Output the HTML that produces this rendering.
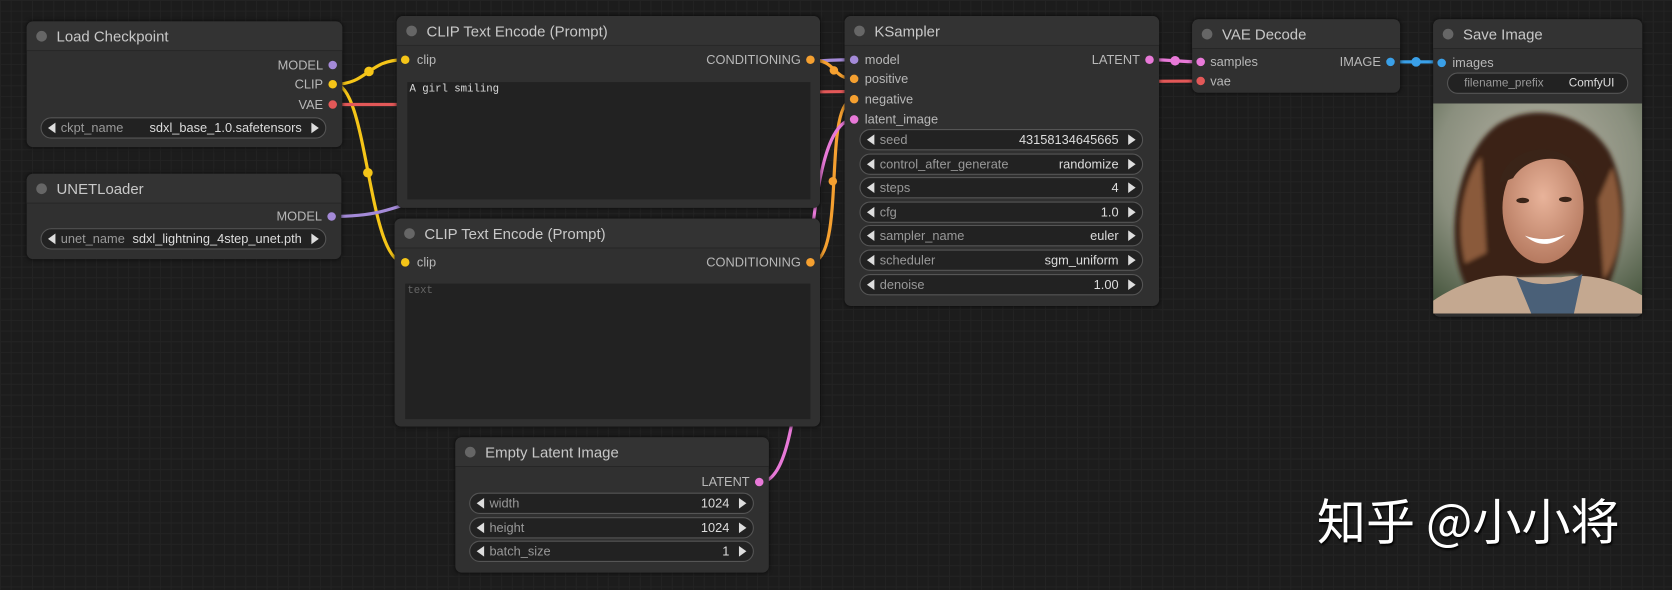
<!DOCTYPE html>
<html><head><meta charset="utf-8"><style>
*{margin:0;padding:0;box-sizing:border-box}
html,body{width:1672px;height:590px;overflow:hidden;background:#1d1d1d}
#w{position:absolute;left:0;top:0;width:1568px;height:553px;transform:scale(1.06633);transform-origin:0 0;
background-color:#1c1c1c;background-image:linear-gradient(#232323 1px,transparent 1px),linear-gradient(90deg,#232323 1px,transparent 1px);background-size:10px 10px;
font-family:"Liberation Sans",Arial,sans-serif;color:#aaa}
.n{position:absolute;background:#303030;border-radius:6px;box-shadow:0 0 4px #000a}
.t{position:absolute;left:0;top:0;right:0;height:28px;background:#333;border-bottom:1px solid #262626;border-radius:6px 6px 0 0;color:#c8c8c8;font-size:14px;line-height:28px;padding-left:28px}
.t:before{content:"";position:absolute;left:9px;top:9px;width:10px;height:10px;border-radius:50%;background:#666}
.s{position:absolute;font-size:12px;color:#b8b8b8;line-height:14px}
.d{position:absolute;width:8px;height:8px;border-radius:50%}
.wg{position:absolute;height:20px;border:1px solid #555;background:#222;border-radius:10px;font-size:12px;line-height:18px;color:#999}
.wg .l{position:absolute;left:18px}
.wg .v{position:absolute;right:22px;color:#ddd}
.wg:before{content:"";position:absolute;left:6px;top:4px;border:5px solid transparent;border-right:7px solid #ddd;border-left:0}
.wg:after{content:"";position:absolute;right:6px;top:4px;border:5px solid transparent;border-left:7px solid #ddd;border-right:0}
.wg.np:before,.wg.np:after{display:none}
.ta{position:absolute;background:#222;font-family:"Liberation Mono",monospace;font-size:10px;color:#ddd;padding:2px 2px}
</style></head><body><div id="w">
<svg width="1568" height="553" style="position:absolute;left:0;top:0" fill="none" stroke-width="3">
<path d="M314 79 C345 79 345 56 379 56" stroke="#f5c518"/>
<path d="M314 79 C345 79 345 246 379 246" stroke="#f5c518"/>
<path d="M314 98 L380 98 C600 98 600 88 780 86 C950 84 950 76 1125 76" stroke="#e35858"/>
<path d="M311 203 C372 203 372 190 500 150 C700 80 700 56 801 56" stroke="#a48ad8"/>
<path d="M760 56 C785 56 780 74 801 74" stroke="#f5a030"/>
<path d="M760 246 C795 246 770 93 801 93" stroke="#f5a030"/>
<path d="M713 452 C770 452 740 112 801 112" stroke="#e879d8"/>
<path d="M1079 56 C1102 56 1102 58 1126 58" stroke="#e879d8"/>
<path d="M1305 58 L1352 58" stroke="#3aa0e8"/>
<g stroke="none"><circle cx="346" cy="67" r="4.5" fill="#f5c518"/><circle cx="345" cy="162" r="4.5" fill="#f5c518"/><circle cx="1102" cy="57" r="4.5" fill="#e879d8"/><circle cx="1328" cy="58" r="4.5" fill="#3aa0e8"/><circle cx="782" cy="66" r="4" fill="#f5a030"/><circle cx="781" cy="170" r="4" fill="#f5a030"/></g>
</svg>

<div class="n" style="left:25px;top:20px;width:296px;height:118px"><div class="t">Load Checkpoint</div>
<div class="s" style="right:18px;top:34px">MODEL</div><div class="d" style="right:5px;top:37px;background:#a48ad8"></div>
<div class="s" style="right:18px;top:52px">CLIP</div><div class="d" style="right:5px;top:55px;background:#f5c518"></div>
<div class="s" style="right:18px;top:71px">VAE</div><div class="d" style="right:5px;top:74px;background:#e35858"></div>
<div class="wg" style="left:13px;top:90px;width:268px"><span class="l">ckpt_name</span><span class="v">sdxl_base_1.0.safetensors</span></div></div>

<div class="n" style="left:25px;top:163px;width:295px;height:80px"><div class="t">UNETLoader</div>
<div class="s" style="right:18px;top:33px">MODEL</div><div class="d" style="right:5px;top:36px;background:#a48ad8"></div>
<div class="wg" style="left:13px;top:51px;width:268px"><span class="l">unet_name</span><span class="v">sdxl_lightning_4step_unet.pth</span></div></div>

<div class="n" style="left:372px;top:15px;width:397px;height:180px"><div class="t">CLIP Text Encode (Prompt)</div>
<div class="s" style="left:19px;top:34px">clip</div><div class="d" style="left:4px;top:37px;background:#f5c518"></div>
<div class="s" style="right:18px;top:34px">CONDITIONING</div><div class="d" style="right:5px;top:37px;background:#f5a030"></div>
<div class="ta" style="left:10px;top:62px;width:378px;height:110px">A girl smiling</div></div>

<div class="n" style="left:370px;top:205px;width:399px;height:195px"><div class="t">CLIP Text Encode (Prompt)</div>
<div class="s" style="left:21px;top:34px">clip</div><div class="d" style="left:6px;top:37px;background:#f5c518"></div>
<div class="s" style="right:18px;top:34px">CONDITIONING</div><div class="d" style="right:5px;top:37px;background:#f5a030"></div>
<div class="ta" style="left:10px;top:61px;width:380px;height:127px;color:#666">text</div></div>

<div class="n" style="left:427px;top:410px;width:294px;height:127px"><div class="t">Empty Latent Image</div>
<div class="s" style="right:18px;top:35px">LATENT</div><div class="d" style="right:5px;top:38px;background:#e879d8"></div>
<div class="wg" style="left:13px;top:52px;width:267px"><span class="l">width</span><span class="v">1024</span></div>
<div class="wg" style="left:13px;top:75px;width:267px"><span class="l">height</span><span class="v">1024</span></div>
<div class="wg" style="left:13px;top:97px;width:267px"><span class="l">batch_size</span><span class="v">1</span></div></div>

<div class="n" style="left:792px;top:15px;width:295px;height:272px"><div class="t">KSampler</div>
<div class="s" style="left:19px;top:34px">model</div><div class="d" style="left:5px;top:37px;background:#a48ad8"></div>
<div class="s" style="left:19px;top:52px">positive</div><div class="d" style="left:5px;top:55px;background:#f5a030"></div>
<div class="s" style="left:19px;top:71px">negative</div><div class="d" style="left:5px;top:74px;background:#f5a030"></div>
<div class="s" style="left:19px;top:90px">latent_image</div><div class="d" style="left:5px;top:93px;background:#e879d8"></div>
<div class="s" style="right:18px;top:34px">LATENT</div><div class="d" style="right:5px;top:37px;background:#e879d8"></div>
<div class="wg" style="left:14px;top:106px;width:266px"><span class="l">seed</span><span class="v">43158134645665</span></div>
<div class="wg" style="left:14px;top:129px;width:266px"><span class="l">control_after_generate</span><span class="v">randomize</span></div>
<div class="wg" style="left:14px;top:151px;width:266px"><span class="l">steps</span><span class="v">4</span></div>
<div class="wg" style="left:14px;top:174px;width:266px"><span class="l">cfg</span><span class="v">1.0</span></div>
<div class="wg" style="left:14px;top:196px;width:266px"><span class="l">sampler_name</span><span class="v">euler</span></div>
<div class="wg" style="left:14px;top:219px;width:266px"><span class="l">scheduler</span><span class="v">sgm_uniform</span></div>
<div class="wg" style="left:14px;top:242px;width:266px"><span class="l">denoise</span><span class="v">1.00</span></div></div>

<div class="n" style="left:1118px;top:18px;width:195px;height:69px"><div class="t">VAE Decode</div>
<div class="s" style="left:17px;top:33px">samples</div><div class="d" style="left:4px;top:36px;background:#e879d8"></div>
<div class="s" style="left:17px;top:51px">vae</div><div class="d" style="left:4px;top:54px;background:#e35858"></div>
<div class="s" style="right:18px;top:33px">IMAGE</div><div class="d" style="right:5px;top:36px;background:#3aa0e8"></div></div>

<div class="n" style="left:1344px;top:18px;width:196px;height:279px"><div class="t">Save Image</div>
<div class="s" style="left:18px;top:34px">images</div><div class="d" style="left:4px;top:37px;background:#3aa0e8"></div>
<div class="wg np" style="left:13px;top:50px;width:170px;font-size:11px"><span class="l" style="left:15px;color:#999">filename_prefix</span><span class="v" style="right:12px">ComfyUI</span></div>
<svg style="position:absolute;left:0;top:79px" width="196" height="197" viewBox="0 0 196 197">
<defs><radialGradient id="bg" cx="50%" cy="30%" r="80%"><stop offset="0" stop-color="#b8b4a6"/><stop offset="0.6" stop-color="#8a8f7e"/><stop offset="1" stop-color="#48573f"/></radialGradient>
<radialGradient id="sk" cx="50%" cy="40%" r="60%"><stop offset="0" stop-color="#e8b39a"/><stop offset="1" stop-color="#b67a60"/></radialGradient>
<filter id="bl"><feGaussianBlur stdDeviation="2"/></filter></defs>
<rect width="196" height="197" fill="url(#bg)"/>
<g filter="url(#bl)">
<path d="M30 170 C10 130 20 50 60 20 C90 0 140 5 165 45 C185 85 180 130 165 170 C150 175 140 160 130 160 L70 165 C55 175 40 178 30 170 Z" fill="#3a2418"/>
<path d="M30 150 C20 110 30 70 45 50 L50 140Z M168 60 C180 100 178 140 160 165 L155 90Z" fill="#8a5a3a"/>
</g>
<path d="M0 197 L0 185 C30 165 60 158 80 163 L120 163 C150 158 175 168 196 180 L196 197 Z" fill="#c4a890"/>
<path d="M78 163 L92 197 L132 197 L140 160 C120 172 95 172 78 163 Z" fill="#4a6078"/>
<ellipse cx="103" cy="98" rx="38" ry="52" fill="url(#sk)"/>
<path d="M62 75 C70 35 130 30 145 75 C135 45 90 45 75 70 Z" fill="#3a2418"/>
<ellipse cx="84" cy="91" rx="6" ry="2.5" fill="#3a2418"/><ellipse cx="124" cy="90" rx="6" ry="2.5" fill="#3a2418"/>
<path d="M86 124 Q105 140 124 123 Q105 131 86 124Z" fill="#fff"/>
</svg></div>

<div style="position:absolute;left:1235px;top:458px;font-family:'Noto Sans CJK SC',sans-serif;font-size:46px;color:#fff;line-height:58px;text-shadow:1px 2px 2px #000;white-space:nowrap">知乎 @小小将</div>
</div></body></html>
